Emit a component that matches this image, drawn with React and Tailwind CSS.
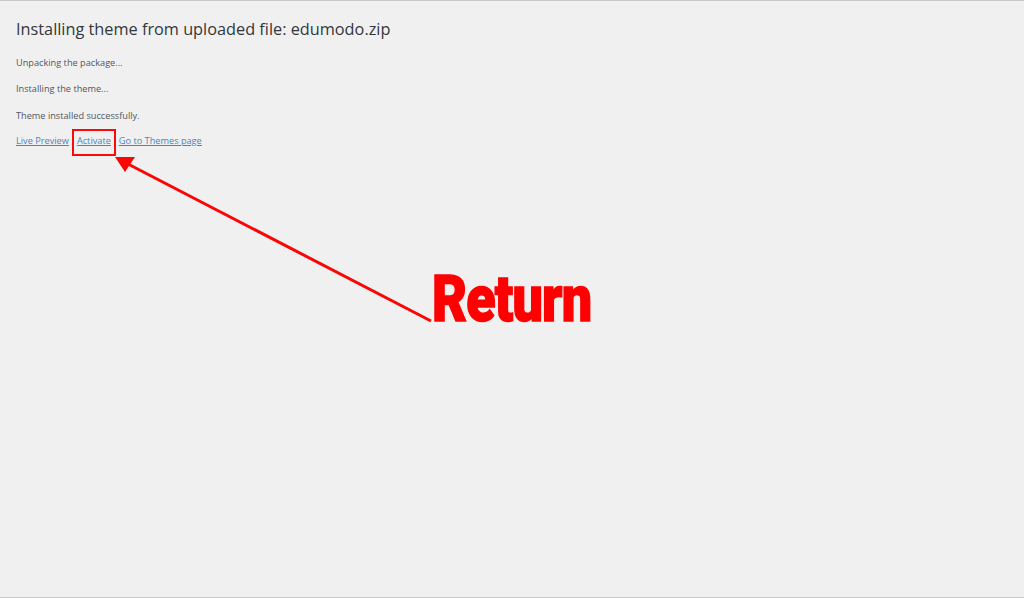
const App = () => {
    return (
        <div className="relative h-[598px] w-[1024px] overflow-hidden bg-[#f0f0f1] font-['Open_Sans',sans-serif]">
            <div className="flex h-full flex-col border-y border-[#c9c9c9] pl-4 pt-[17px]">
                <h1 className="text-[16.3px] leading-[22px] font-normal text-[#33373c]">Installing theme from uploaded file: edumodo.zip</h1>
                <div className="mt-[17.5px] flex flex-col gap-[16px] text-[9.2px] leading-[10.5px] text-[#50575e]">
                    <p>Unpacking the package...</p>
                    <p>Installing the theme...</p>
                    <p>Theme installed successfully.</p>
                </div>
                <div className="mt-[15px] flex gap-[8px] text-[9.2px] leading-[10.5px] text-[#4a86ba] underline">
                    <a href="#">Live Preview</a>
                    <a href="#">Activate</a>
                    <a href="#">Go to Themes page</a>
                </div>
            </div>

            {/* annotation over the page */}
            <div className="absolute left-[72px] top-[129px] h-[27px] w-[44px] border-[2.5px] border-[#fa0a0a]"></div>
            <svg className="absolute left-0 top-0" width="1024" height="598" viewBox="0 0 1024 598">
                <line x1="431" y1="321" x2="128" y2="164" stroke="#fb0505" strokeWidth="3" />
                <polygon points="115,157 135,157 125,172" fill="#fb0505" />
            </svg>
            <div className="absolute left-[432px] top-[264px] origin-left scale-x-[0.842] text-[64px] leading-[72px] font-black tracking-[-1px] whitespace-nowrap text-[#ff0000] font-['Roboto',sans-serif] [-webkit-text-stroke:1.5px_#ff0000]">Return</div>
        </div>
    )
}

export default App
